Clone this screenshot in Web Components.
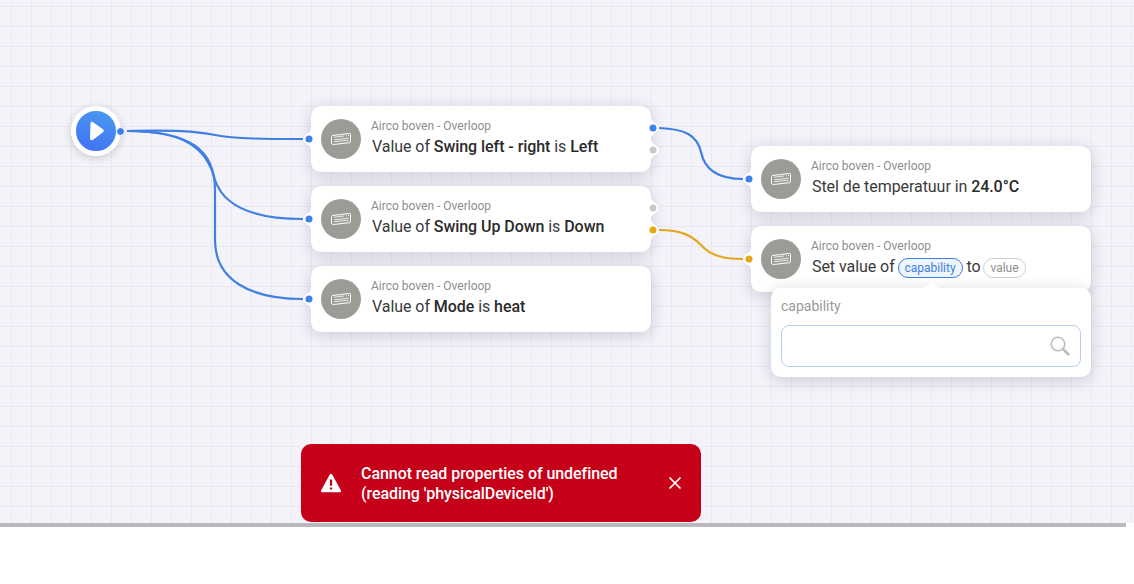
<!DOCTYPE html>
<html>
<head>
<meta charset="utf-8">
<title>Flow</title>
<style>
  html, body { margin: 0; background: #fff; font-family: Roboto, "Liberation Sans", sans-serif; }
</style>
</head>
<body>
<flow-canvas>
  <flow-start x="71" y="106"></flow-start>

  <flow-node x="311" y="106" in="#3b82ea" out="#3b82ea,#c9c9cf" title="Airco boven - Overloop">Value of <b>Swing left - right</b> is <b>Left</b></flow-node>
  <flow-node x="311" y="186" in="#3b82ea" out="#c9c9cf,#e6a817" title="Airco boven - Overloop">Value of <b>Swing Up Down</b> is <b>Down</b></flow-node>
  <flow-node x="311" y="266" in="#3b82ea" title="Airco boven - Overloop">Value of <b>Mode</b> is <b>heat</b></flow-node>
  <flow-node x="751" y="146" in="#3b82ea" title="Airco boven - Overloop">Stel de temperatuur in <b>24.0°C</b></flow-node>
  <flow-node x="751" y="226" in="#e6a817" title="Airco boven - Overloop">Set value of <flow-pill active>capability</flow-pill> to <flow-pill>value</flow-pill></flow-node>

  <flow-popup x="771" y="288" label="capability"></flow-popup>
  <flow-toast x="301" y="444">Cannot read properties of undefined<br>(reading 'physicalDeviceId')</flow-toast>
</flow-canvas>

<script>
  // Lienzo con la cuadricula, las conexiones y la barra de abajo
  class FlowCanvas extends HTMLElement {
    constructor() {
      super();
      this.attachShadow({ mode: 'open' });
      this.shadowRoot.innerHTML = `
        <style>
          :host { display: block; width: 1134px; height: 584px; overflow: hidden; background: #fff; }
          .area {
            position: relative;
            height: 523px;
            background-color: #f4f3fa;
            background-image:
              linear-gradient(#e9e8f1 1px, transparent 1px),
              linear-gradient(90deg, #e9e8f1 1px, transparent 1px);
            background-size: 20px 20px;
            background-position: 11px 6px;
          }
          svg { position: absolute; left: 0; top: 0; }
          path { fill: none; stroke-width: 2.200; }
          .bar { width: 1126px; height: 4px; background: #bab9c0; }
        </style>
        <div class="area">
          <svg width="1134" height="523">
            <g stroke="#3f80e2">
              <path d="M127 131C175 130 195 131 215 135C235 139 270 139 303 139"/>
              <path d="M127 131C185 131 207 148 215 180C225 210 260 219 303 219"/>
              <path d="M127 131C190 131 215 150 215 190V240C215 280 250 299 303 299"/>
              <path d="M659 128C685 129 697 135 701 152C705 172 722 179 743 179"/>
            </g>
            <path stroke="#e3a81e" d="M659 230C682 230 692 236 701 245C710 255 722 259 743 259"/>
          </svg>
          <slot></slot>
        </div>
        <div class="bar"></div>
      `;
    }
  }

  // Boton de inicio con el triangulo de play
  class FlowStart extends HTMLElement {
    constructor() {
      super();
      this.attachShadow({ mode: 'open' });
      this.shadowRoot.innerHTML = `
        <style>
          :host { position: absolute; display: block; width: 50px; height: 50px; }
          .ring {
            box-sizing: border-box;
            width: 50px; height: 50px;
            border: 5px solid #fff;
            border-radius: 50%;
            background: linear-gradient(20deg, #3f6ff5, #4a9bf0);
            box-shadow: 0 2px 10px rgba(0,0,0,.18);
            display: flex; align-items: center; justify-content: center;
          }
          .port { position: absolute; left: 45px; top: 21px; width: 7px; height: 7px; border-radius: 50%; background: #3b82ea; border: 1.500px solid #fff; }
        </style>
        <div class="ring">
          <svg width="18" height="20" viewBox="0 0 18 20">
            <path d="M3.500 2.200C3.500 1 4.700.500 5.700 1L16 8.300C17 9 17 10.500 16 11.200L5.700 19C4.700 19.600 3 19 3 17.800Z" fill="#fff"/>
          </svg>
        </div>
        <div class="port"></div>
      `;
      this.style.left = this.getAttribute('x') + 'px';
      this.style.top = this.getAttribute('y') + 'px';
    }
  }

  // Tarjeta de un nodo: icono, titulo pequeno, frase y puertos
  class FlowNode extends HTMLElement {
    constructor() {
      super();
      this.attachShadow({ mode: 'open' });
      // Puerto: bulto blanco en el borde de la tarjeta con el punto encima
      const bump = (color, side, y) => `
        <svg class="port ${side}" style="top:${y - 11}px" width="9" height="22" viewBox="0 0 9 22">
          <path d="${side === 'l' ? 'M9 0C9 6 1 6 1 11C1 16 9 16 9 22Z' : 'M0 0C0 6 8 6 8 11C8 16 0 16 0 22Z'}" fill="#fff"/>
          <circle cx="${side === 'l' ? 7 : 2}" cy="11" r="3.500" fill="${color}"/>
        </svg>`;
      let ports = '';
      if (this.hasAttribute('in')) ports += bump(this.getAttribute('in'), 'l', 33);
      if (this.hasAttribute('out')) {
        const [a, b] = this.getAttribute('out').split(',');
        ports += bump(a, 'r', 22) + bump(b, 'r', 44);
      }
      this.shadowRoot.innerHTML = `
        <style>
          :host { position: absolute; display: block; width: 340px; height: 66px; }
          .card {
            box-sizing: border-box;
            height: 66px;
            padding: 0 10px;
            background: #fff;
            border-radius: 10px;
            box-shadow: 0 3px 16px rgba(40,40,60,.2);
            display: flex; align-items: center; gap: 10px;
          }
          .icon { width: 40px; height: 40px; flex: none; border-radius: 50%; background: #9c9b96; display: flex; align-items: center; justify-content: center; }
          .text { min-width: 0; padding-bottom: 3px; }
          .title { font-size: 12px; line-height: 18px; color: #8e8e8e; }
          .line { font-size: 16px; line-height: 22px; color: #3a3a3a; margin: 1px 0 0 1px; white-space: nowrap; letter-spacing: -.06px; }
          ::slotted(b) { font-weight: 500; color: #2a2a2a; }
          .port { position: absolute; overflow: visible; }
          .port.l { left: -9px; }
          .port.r { right: -9px; }
        </style>
        <div class="card">
          <div class="icon">
            <svg width="22" height="14" viewBox="0 0 22 14" fill="none" stroke="#fff" stroke-width="1">
              <path d="M2.500 3.500L19.500 1.500C20.200 1.400 20.500 1.800 20.500 2.500V9.500C20.500 10.200 20.200 10.600 19.500 10.700L3.500 12.500C2.500 12.600 1.500 12 1.500 11V4.500C1.500 4 1.900 3.600 2.500 3.500Z"/>
              <path d="M4 9.800L18.500 8.200M4 7.800L18.500 6.200" stroke-opacity=".8"/>
              <path d="M4 5.200L14 4M16 3.800L17 3.700M18 3.600L19 3.500" stroke-opacity=".8"/>
            </svg>
          </div>
          <div class="text">
            <div class="title">${this.getAttribute('title')}</div>
            <div class="line"><slot></slot></div>
          </div>
        </div>
        ${ports}
      `;
      this.removeAttribute('title');
      this.style.left = this.getAttribute('x') + 'px';
      this.style.top = this.getAttribute('y') + 'px';
    }
  }

  // Pastilla de un argumento dentro de la frase
  class FlowPill extends HTMLElement {
    constructor() {
      super();
      this.attachShadow({ mode: 'open' });
      this.shadowRoot.innerHTML = `
        <style>
          :host {
            display: inline-block;
            box-sizing: border-box;
            height: 20px;
            padding: 0 6px;
            border: 1px solid #cfcfcf;
            border-radius: 10px;
            font-size: 12px;
            line-height: 18px;
            color: #8e8e8e;
            letter-spacing: -.02px;
            margin-left: -1px;
          }
          :host([active]) { border-color: #3f80e2; background: #eef5fd; color: #3f80e2; }
        </style>
        <slot></slot>
      `;
    }
  }

  // Desplegable con el campo de busqueda
  class FlowPopup extends HTMLElement {
    constructor() {
      super();
      this.attachShadow({ mode: 'open' });
      this.shadowRoot.innerHTML = `
        <style>
          :host { position: absolute; display: block; width: 320px; }
          .box {
            box-sizing: border-box;
            height: 89px;
            padding: 10px;
            background: #fff;
            border-radius: 10px;
            box-shadow: 0 3px 16px rgba(40,40,60,.2);
          }
          .arrow { position: absolute; left: 152px; top: -6px; width: 0; height: 0; border: 8px solid transparent; border-top: 0; border-bottom: 6px solid #fff; }
          .label { font-size: 14px; line-height: 17px; color: #9a9a9a; margin-bottom: 10px; }
          .field {
            box-sizing: border-box;
            height: 42px;
            padding: 0 10px;
            border: 1.500px solid #b5d0ef;
            border-radius: 8px;
            display: flex; align-items: center; justify-content: flex-end;
          }
        </style>
        <div class="arrow"></div>
        <div class="box">
          <div class="label">${this.getAttribute('label')}</div>
          <div class="field">
            <svg width="20" height="20" viewBox="0 0 20 20" fill="none" stroke="#bcbcbc">
              <circle cx="8" cy="8" r="6.800" stroke-width="1.600"/>
              <path d="M13 13L19 19" stroke-width="2.600"/>
            </svg>
          </div>
        </div>
      `;
      this.style.left = this.getAttribute('x') + 'px';
      this.style.top = this.getAttribute('y') + 'px';
    }
  }

  // Aviso rojo de error
  class FlowToast extends HTMLElement {
    constructor() {
      super();
      this.attachShadow({ mode: 'open' });
      this.shadowRoot.innerHTML = `
        <style>
          :host {
            position: absolute;
            box-sizing: border-box;
            width: 400px; height: 78px;
            padding: 0 19px 0 20px;
            display: flex; align-items: center;
            background: #c60018;
            border-radius: 10px;
            color: #fff;
            font-size: 16px;
            font-weight: 500;
            line-height: 20px;
            letter-spacing: -.06px;
          }
          .msg { flex: 1; margin-left: 20px; padding-top: 1px; }
        </style>
        <svg width="20" height="20" viewBox="0 0 20 20">
          <path fill="#fff" fill-rule="evenodd" d="M10 .800C10.500.800 10.900 1 11.200 1.500L19.800 17.200C20.300 18.200 19.700 19.200 18.600 19.200H1.400C.300 19.200-.300 18.200.200 17.200L8.800 1.500C9.100 1 9.500.800 10 .800ZM8.900 6.500V12.800H11.100V6.500ZM8.900 14.400V16.600H11.100V14.400Z"/>
        </svg>
        <div class="msg"><slot></slot></div>
        <svg width="14" height="14" viewBox="0 0 14 14" stroke="#fff" stroke-width="1.700">
          <path d="M1.500 1.500L12.500 12.500M12.500 1.500L1.500 12.500"/>
        </svg>
      `;
      this.style.left = this.getAttribute('x') + 'px';
      this.style.top = this.getAttribute('y') + 'px';
    }
  }

  customElements.define('flow-canvas', FlowCanvas);
  customElements.define('flow-start', FlowStart);
  customElements.define('flow-node', FlowNode);
  customElements.define('flow-pill', FlowPill);
  customElements.define('flow-popup', FlowPopup);
  customElements.define('flow-toast', FlowToast);
</script>
</body>
</html>
